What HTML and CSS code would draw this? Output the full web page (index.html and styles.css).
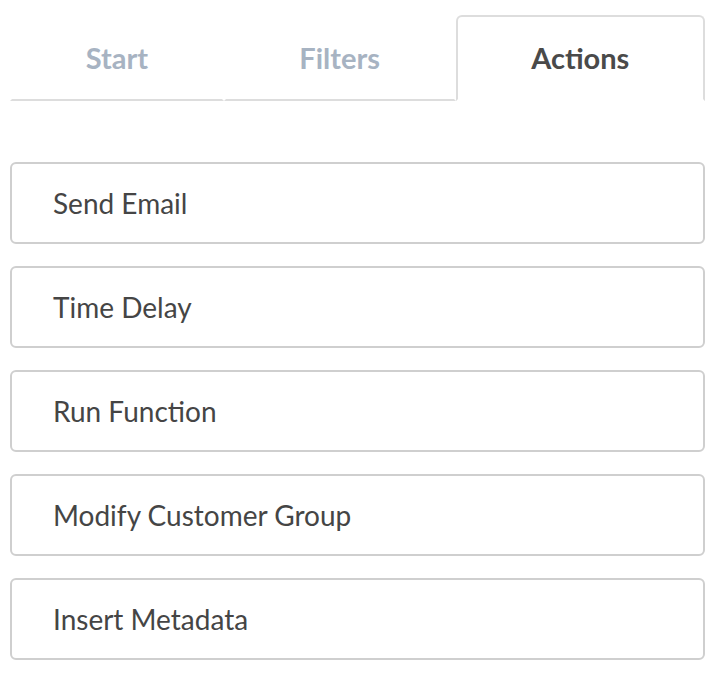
FILE: index.html
```html
<!DOCTYPE html>
<html lang="en">
<head>
<meta charset="utf-8">
<title>Actions</title>
<link rel="stylesheet" href="styles.css">
</head>
<body>
<div class="panel">
  <nav class="tabs">
    <div class="tab">Start</div>
    <div class="tab">Filters</div>
    <div class="tab tab--active">Actions</div>
  </nav>
  <ul class="actions">
    <li class="action">Send Email</li>
    <li class="action">Time Delay</li>
    <li class="action">Run Function</li>
    <li class="action">Modify Customer Group</li>
    <li class="action">Insert Metadata</li>
  </ul>
</div>
</body>
</html>
```
FILE: styles.css
```css
html, body {
  margin: 0;
  padding: 0;
  background: #ffffff;
}

body {
  font-family: "Lato", "Liberation Sans", sans-serif;
  color: #454545;
}

.panel {
  width: 695px;
  margin: 15px 0 0 10px;
}

.tabs {
  display: flex;
  align-items: stretch;
}

.tab {
  flex: 1 1 auto;
  box-sizing: border-box;
  height: 86px;
  display: flex;
  align-items: center;
  justify-content: center;
  padding-bottom: 1px;
  font-size: 29px;
  font-weight: 700;
  color: #a7b3c2;
  border: 2px solid transparent;
  border-bottom-color: #dddddd;
  border-radius: 6px 6px 0 0;
}

.tab--active {
  color: #4a4a4a;
  border-color: #dddddd;
  border-bottom-color: transparent;
}

.actions {
  list-style: none;
  margin: 61px 0 0 0;
  padding: 0;
  display: flex;
  flex-direction: column;
  gap: 22px;
}

.action {
  box-sizing: border-box;
  height: 82px;
  display: flex;
  align-items: center;
  padding-left: 41px;
  border: 2px solid #cfcfcf;
  border-radius: 6px;
  font-size: 28px;
  font-weight: 400;
  color: #454545;
}
```
